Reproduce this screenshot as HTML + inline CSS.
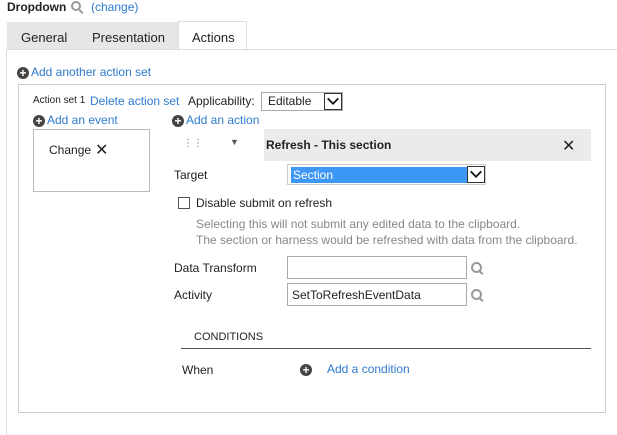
<!DOCTYPE html><html><head><style>
body{margin:0;width:617px;height:435px;background:#fff;font-family:"Liberation Sans",sans-serif;font-size:12px;color:#222;position:relative;overflow:hidden}
.a{position:absolute;white-space:nowrap}
.l{color:#2e7bcf}
.p{display:inline-block;width:12px;height:12px;border-radius:50%;background:#444;color:#fff;font-size:12px;line-height:12px;text-align:center;font-weight:bold;vertical-align:-1px;margin-right:2px}
.inp{position:absolute;border:1px solid #aaa;background:#fff;box-sizing:border-box}
.mag{position:absolute;width:7px;height:7px;border:2px solid #999;border-radius:50%}
.mag:after{content:"";position:absolute;width:2px;height:5px;background:#999;left:7px;top:6px;transform:rotate(-45deg)}
.chev{position:absolute;border:1px solid #333;background:#fff;box-sizing:border-box}
</style></head><body>
<div class="a" style="left:7px;top:0;font-weight:bold;font-size:12px">Dropdown</div>
<div class="mag" style="left:71px;top:1px;width:6px;height:6px"></div>
<div class="a l" style="left:91px;top:0;font-size:12px">(change)</div>
<div class="a" style="left:7px;top:22px;width:171px;height:27px;background:#e6e6e6"></div>
<div class="a" style="left:178px;top:21px;width:67px;height:29px;border:1px solid #ddd;border-bottom:none;background:#fff"></div>
<div class="a" style="left:7px;top:49px;width:610px;border-top:1px solid #ddd"></div>
<div class="a" style="left:6px;top:49px;height:386px;border-left:1px solid #ddd"></div>
<div class="a" style="left:21px;top:30px;font-size:13px">General</div>
<div class="a" style="left:92px;top:30px;font-size:13px">Presentation</div>
<div class="a" style="left:192px;top:30px;font-size:13px">Actions</div>
<div class="a l" style="left:17px;top:65px"><span class="p">+</span>Add another action set</div>
<div class="a" style="left:18px;top:84px;width:586px;height:327px;border:1px solid #ccc"></div>
<div class="a" style="left:33px;top:95px;font-size:10px">Action set 1</div>
<div class="a l" style="left:90px;top:94px">Delete action set</div>
<div class="a" style="left:188px;top:94px">Applicability:</div>
<div class="inp" style="left:261px;top:92px;width:82px;height:19px"></div>
<div class="a" style="left:268px;top:94px">Editable</div>
<svg class="chev" style="left:324px;top:93px;width:18px;height:17px" viewBox="0 0 18 17"><path d="M3 5l6 6 6-6" stroke="#111" stroke-width="2" fill="none"/></svg>
<div class="a l" style="left:33px;top:113px"><span class="p">+</span>Add an event</div>
<div class="a l" style="left:172px;top:113px"><span class="p">+</span>Add an action</div>
<div class="inp" style="left:33px;top:129px;width:117px;height:63px;border-color:#bbb"></div>
<div class="a" style="left:49px;top:143px">Change</div>
<div class="a" style="left:95px;top:140px;font-size:16px">&#10005;</div>
<div class="a" style="left:183px;top:138px;font-size:10px;color:#666">&#8942;&#8942;</div>
<div class="a" style="left:230px;top:137px;font-size:9px;color:#555">&#9660;</div>
<div class="a" style="left:264px;top:129px;width:327px;height:32px;background:#ebebeb"></div>
<div class="a" style="left:266px;top:138px;font-weight:bold">Refresh - This section</div>
<div class="a" style="left:562px;top:136px;font-size:16px">&#10005;</div>
<div class="a" style="left:174px;top:168px">Target</div>
<div class="inp" style="left:287px;top:164px;width:199px;height:21px;border-color:#ccc"></div>
<div class="a" style="left:291px;top:167px;width:176px;height:16px;background:#3d97f5"></div>
<div class="a" style="left:293px;top:168px;color:#fff">Section</div>
<svg class="chev" style="left:467px;top:166px;width:18px;height:17px" viewBox="0 0 18 17"><path d="M3 5l6 6 6-6" stroke="#111" stroke-width="2" fill="none"/></svg>
<div class="inp" style="left:178px;top:197px;width:12px;height:12px;border-color:#555"></div>
<div class="a" style="left:196px;top:196px">Disable submit on refresh</div>
<div class="a" style="left:196px;top:217px;color:#888">Selecting this will not submit any edited data to the clipboard.</div>
<div class="a" style="left:196px;top:233px;color:#888">The section or harness would be refreshed with data from the clipboard.</div>
<div class="a" style="left:174px;top:261px">Data Transform</div>
<div class="inp" style="left:287px;top:256px;width:180px;height:23px"></div>
<div class="mag" style="left:471px;top:262px"></div>
<div class="a" style="left:174px;top:288px">Activity</div>
<div class="inp" style="left:287px;top:283px;width:180px;height:23px"></div>
<div class="a" style="left:292px;top:288px">SetToRefreshEventData</div>
<div class="mag" style="left:471px;top:289px"></div>
<div class="a" style="left:194px;top:331px;font-size:11px">CONDITIONS</div>
<div class="a" style="left:181px;top:348px;width:410px;border-top:1px solid #555"></div>
<div class="a" style="left:182px;top:363px">When</div>
<div class="a" style="left:300px;top:362px"><span class="p">+</span></div>
<div class="a l" style="left:327px;top:362px">Add a condition</div>
</body></html>
